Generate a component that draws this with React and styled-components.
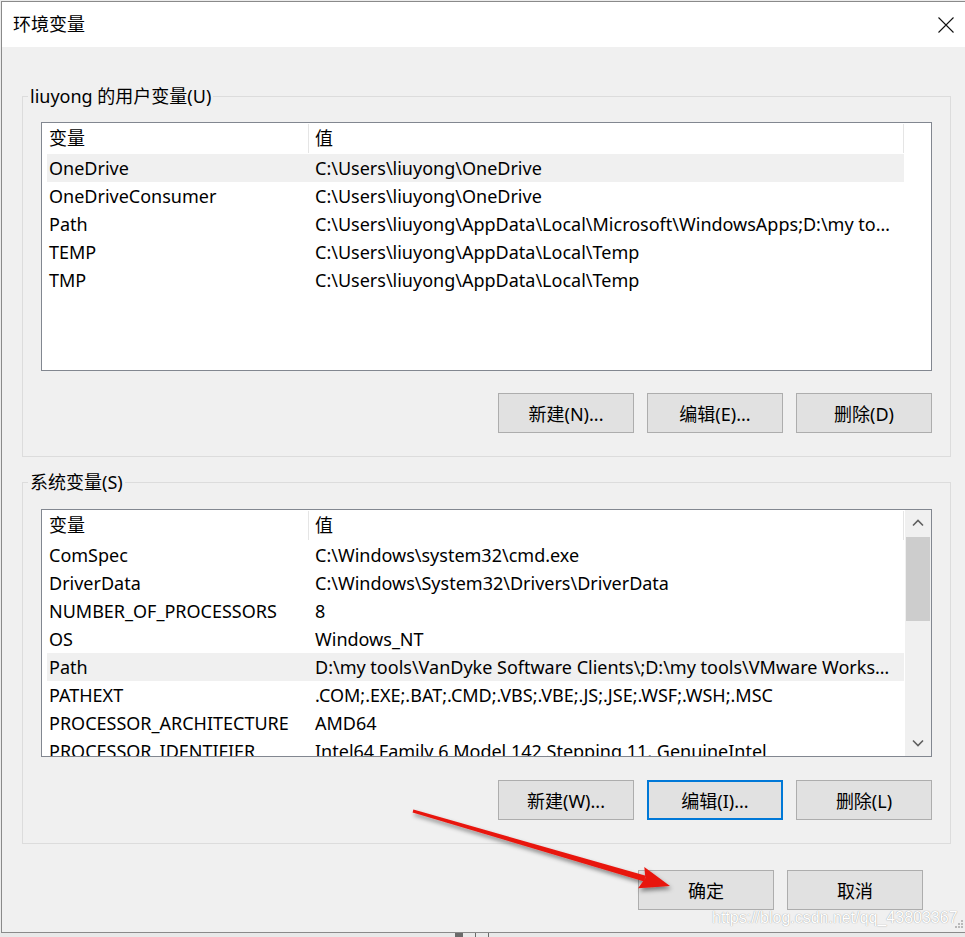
import React from 'react';
import styled, { createGlobalStyle } from 'styled-components';

const GlobalStyle = createGlobalStyle`
  html, body {
    margin: 0;
    padding: 0;
  }
  body {
    width: 965px;
    height: 937px;
    overflow: hidden;
    background: #ececec;
    font-family: "Noto Sans", "Noto Sans CJK SC", sans-serif;
    color: #000;
  }
`;

const userVars = [
  { name: 'OneDrive', value: 'C:\\Users\\liuyong\\OneDrive', hover: true },
  { name: 'OneDriveConsumer', value: 'C:\\Users\\liuyong\\OneDrive' },
  { name: 'Path', value: 'C:\\Users\\liuyong\\AppData\\Local\\Microsoft\\WindowsApps;D:\\my tools\\bin' },
  { name: 'TEMP', value: 'C:\\Users\\liuyong\\AppData\\Local\\Temp' },
  { name: 'TMP', value: 'C:\\Users\\liuyong\\AppData\\Local\\Temp' },
];

const systemVars = [
  { name: 'ComSpec', value: 'C:\\Windows\\system32\\cmd.exe' },
  { name: 'DriverData', value: 'C:\\Windows\\System32\\Drivers\\DriverData' },
  { name: 'NUMBER_OF_PROCESSORS', value: '8' },
  { name: 'OS', value: 'Windows_NT' },
  { name: 'Path', value: 'D:\\my tools\\VanDyke Software Clients\\;D:\\my tools\\VMware Workstation\\bin\\', hover: true },
  { name: 'PATHEXT', value: '.COM;.EXE;.BAT;.CMD;.VBS;.VBE;.JS;.JSE;.WSF;.WSH;.MSC' },
  { name: 'PROCESSOR_ARCHITECTURE', value: 'AMD64' },
  { name: 'PROCESSOR_IDENTIFIER', value: 'Intel64 Family 6 Model 142 Stepping 11, GenuineIntel' },
];

const VarList = ({ items, height, scroll }) => (
  <List height={height}>
    <Table>
      <HeaderRow>
        <HeaderCell width={262} pad={2}>变量</HeaderCell>
        <HeaderCell width={595} pad={6}>值</HeaderCell>
      </HeaderRow>
      {items.map(item => (
        <Row key={item.name} hover={item.hover ? 'true' : 'false'}>
          <Cell width={261} pad={2}>{item.name}</Cell>
          <Cell width={596} pad={7}>{item.value}</Cell>
        </Row>
      ))}
    </Table>
    {scroll && (
      <ScrollBar>
        <ScrollArrow>
          <svg width="12" height="8" viewBox="0 0 12 8">
            <path d="M1 6.5 L6 1.5 L11 6.5" fill="none" stroke="#606060" strokeWidth="1.6" />
          </svg>
        </ScrollArrow>
        <Thumb />
        <ScrollArrow>
          <svg width="12" height="8" viewBox="0 0 12 8">
            <path d="M1 1.5 L6 6.5 L11 1.5" fill="none" stroke="#606060" strokeWidth="1.6" />
          </svg>
        </ScrollArrow>
      </ScrollBar>
    )}
  </List>
);

const App = () => (
  <Page>
    <GlobalStyle />
    <Window>
      <TitleBar>
        <Title>环境变量</Title>
        <svg width="16" height="16" viewBox="0 0 16 16">
          <path d="M0.5 0.5 L15.5 15.5 M15.5 0.5 L0.5 15.5" stroke="#111" strokeWidth="1.1" />
        </svg>
      </TitleBar>
      <Body>
        <Group>
          <Legend>liuyong 的用户变量(U)</Legend>
          <GroupInner top={14}>
            <VarList items={userVars} height={249} />
            <ButtonRow>
              <Button>新建(N)...</Button>
              <Button>编辑(E)...</Button>
              <Button>删除(D)</Button>
            </ButtonRow>
          </GroupInner>
        </Group>
        <Group space={13}>
          <Legend>系统变量(S)</Legend>
          <GroupInner top={15}>
            <VarList items={systemVars} height={248} scroll />
            <ButtonRow gap={23}>
              <Button>新建(W)...</Button>
              <Button focused="true">编辑(I)...</Button>
              <Button>删除(L)</Button>
            </ButtonRow>
          </GroupInner>
        </Group>
        <Footer>
          <Button>确定</Button>
          <Button>取消</Button>
        </Footer>
      </Body>
    </Window>
    <BottomStrip>
      <StripMark width={8} />
      <StripMark width={1} />
      <StripMark width={1} />
    </BottomStrip>

    <Overlay width="965" height="937" viewBox="0 0 965 937">
      <defs>
        <filter id="arrowShadow" x="-10%" y="-30%" width="120%" height="160%">
          <feDropShadow dx="1.5" dy="3" stdDeviation="2" floodColor="#000" floodOpacity="0.45" />
        </filter>
      </defs>
      <g filter="url(#arrowShadow)" fill="#e8140f">
        <polygon points="412.6,812.4 413.4,809.6 645.8,875.8 644.2,881.6" />
        <polygon points="670,886 644.3,867 645.4,878 638.1,888.2" />
      </g>
      <g fill="#b9b9b9">
        <rect x="961" y="920" width="2" height="2" />
        <rect x="958" y="923" width="2" height="2" />
        <rect x="961" y="923" width="2" height="2" />
        <rect x="955" y="926" width="2" height="2" />
        <rect x="958" y="926" width="2" height="2" />
        <rect x="961" y="926" width="2" height="2" />
      </g>
    </Overlay>
    <Watermark>https://blog.csdn.net/qq_43803367</Watermark>
  </Page>
);

const Page = styled.div`
  position: relative;
  width: 965px;
  height: 937px;
  overflow: hidden;
`;

const Window = styled.div`
  margin: 1px 0 0 1px;
  width: 966px;
  height: 932px;
  box-sizing: border-box;
  border: 1px solid #8a8a8a;
  background: #f0f0f0;
  display: flex;
  flex-direction: column;
`;

const TitleBar = styled.div`
  height: 45px;
  flex: none;
  background: #fff;
  display: flex;
  align-items: center;
  justify-content: space-between;
  padding: 0 12px 0 11px;
`;

const Title = styled.span`
  font-size: 18px;
  line-height: 24px;
  margin-top: -1px;
`;

const Body = styled.div`
  flex: 1;
  padding: 37px 0 0 20px;
`;

const Group = styled.fieldset`
  margin: ${props => props.space || 0}px 0 0 0;
  padding: 0;
  width: 929px;
  min-width: 0;
  box-sizing: border-box;
  border: 1px solid #dcdcdc;
`;

const Legend = styled.legend`
  margin-left: 5px;
  padding: 0 2px;
  font-size: 18px;
  line-height: 24px;
`;

const GroupInner = styled.div`
  padding: ${props => props.top}px 17px 23px 18px;
`;

const List = styled.div`
  width: 891px;
  height: ${props => props.height}px;
  box-sizing: border-box;
  border: 1px solid #828790;
  background: #fff;
  display: flex;
  overflow: hidden;
`;

const Table = styled.div`
  flex: 1;
  padding-left: 5px;
  overflow: hidden;
`;

const HeaderRow = styled.div`
  display: flex;
  height: 31px;
`;

const HeaderCell = styled.div`
  width: ${props => props.width}px;
  box-sizing: border-box;
  padding-left: ${props => props.pad}px;
  margin-top: 1px;
  height: 29px;
  line-height: 29px;
  font-size: 18px;
  border-right: 1px solid #e5e5e5;
`;

const Row = styled.div`
  display: flex;
  width: 857px;
  height: 28px;
  line-height: 28px;
  font-size: 18px;
  background: ${props => props.hover === 'true' ? '#f0f0f0' : 'transparent'};
`;

const Cell = styled.div`
  width: ${props => props.width}px;
  box-sizing: border-box;
  padding: 0 10px 0 ${props => props.pad}px;
  white-space: nowrap;
  overflow: hidden;
  text-overflow: ellipsis;
`;

const ScrollBar = styled.div`
  width: 26px;
  flex: none;
  background: #f0f0f0;
  display: flex;
  flex-direction: column;
`;

const ScrollArrow = styled.div`
  height: 26px;
  display: flex;
  align-items: center;
  justify-content: center;
`;

const Thumb = styled.div`
  height: 84px;
  margin: 1px 1px 0 1px;
  background: #cdcdcd;
  margin-bottom: auto;
`;

const ButtonRow = styled.div`
  display: flex;
  justify-content: flex-end;
  gap: 13px;
  padding-right: 1px;
  margin-top: ${props => props.gap || 22}px;
`;

const Button = styled.div`
  width: 136px;
  height: 40px;
  box-sizing: border-box;
  border: ${props => props.focused === 'true' ? '2px solid #0078d7' : '1px solid #adadad'};
  background: #e1e1e1;
  font-size: 18px;
  display: flex;
  align-items: center;
  justify-content: center;
`;

const Footer = styled.div`
  display: flex;
  justify-content: flex-end;
  gap: 13px;
  padding: 26px 43px 0 0;
`;

const BottomStrip = styled.div`
  height: 4px;
  display: flex;
  gap: 12px;
  padding-left: 455px;
  background: #e9e9e9;
`;

const StripMark = styled.div`
  width: ${props => props.width}px;
  background: #6a6a6a;
`;

const Overlay = styled.svg`
  position: absolute;
  left: 0;
  top: 0;
  pointer-events: none;
`;

const Watermark = styled.span`
  position: absolute;
  left: 712px;
  top: 907px;
  font-family: "Liberation Sans", Arial, sans-serif;
  font-size: 16px;
  line-height: 22px;
  color: #fff;
  text-shadow: 0 0 1px rgba(0, 0, 0, 0.45);
  pointer-events: none;
`;

export default App;
